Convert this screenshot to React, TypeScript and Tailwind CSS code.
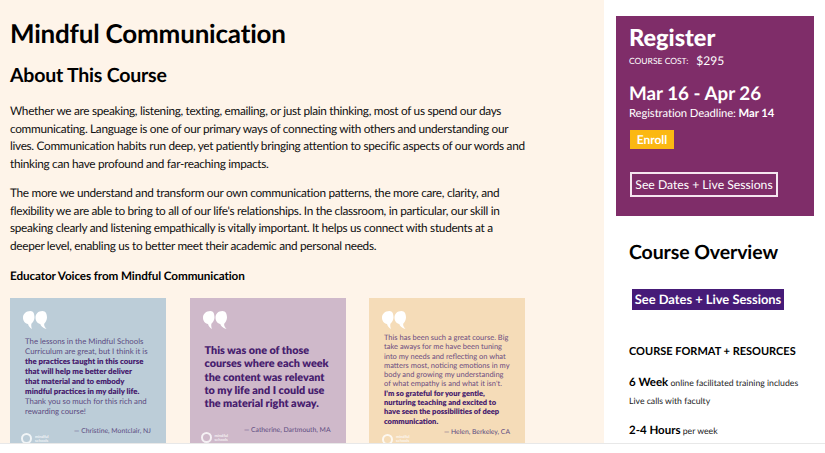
const font = "font-['Lato','Open_Sans',sans-serif]";

function QuoteMark() {
  return (
    <svg width="24" height="18" viewBox="0 0 24 18" className="block" fill="#fff">
      <path d="M7.500 0C3 0 0 2.800 0 6.800c0 3.400 2.200 5.700 5 6.200.6 2 1.700 3.700 4 5-.8-2-.9-3.700-.6-5.300C10 11.500 11.500 9 11.500 6.500 11.500 2.800 10.300 0 7.500 0z" />
      <path d="M19.500 0C15 0 12.500 2.800 12.500 6.800c0 3.400 2.200 5.700 4.800 6.200.7 2 1.900 3.700 6.200 5-2-2-2.500-3.700-2.300-5.300C22.600 11.500 24 9 24 6.500 24 2.800 22.500 0 19.500 0z" />
    </svg>
  );
}

function CardLogo() {
  return (
    <div className="flex items-center gap-[3px] opacity-80">
      <div className="h-[11px] w-[11px] rounded-full border-[2.500px] border-white" />
      <div className="text-[4px] leading-[4px] font-bold text-white">
        mindful
        <br />
        schools
      </div>
    </div>
  );
}

function VoiceCard({
  color,
  children,
  byline,
  top,
  bylineGap,
  logoOffset,
}: {
  color: string;
  children: React.ReactNode;
  byline: string;
  top: string;
  bylineGap: string;
  logoOffset: string;
}) {
  return (
    <div className={`h-[156px] w-[156px] shrink-0 pt-[13px] pr-[15px] pl-[15px] ${color}`}>
      <div className="-ml-[2px]">
        <QuoteMark />
      </div>
      <div className={top}>{children}</div>
      <div className={`text-right text-[6.800px] leading-[8px] text-[#5b4a80] ${bylineGap}`}>{byline}</div>
      <div className={`-mt-[2px] ${logoOffset}`}>
        <CardLogo />
      </div>
    </div>
  );
}

export default function App() {
  return (
    <div className={`flex h-[453px] w-[825px] flex-col overflow-hidden bg-white text-black [text-rendering:geometricPrecision] ${font}`}>
      <div className="flex h-[443px] min-h-0">
        <main className="w-[604px] shrink-0 overflow-hidden bg-[#fef4e9] pl-[10px]">
          <h1 className="mt-[15px] text-[26px] leading-[36px] font-bold tracking-[-0.2px]">Mindful Communication</h1>
          <h2 className="mt-[11px] text-[19.500px] leading-[28px] font-bold tracking-[-0.2px]">About This Course</h2>
          <p className="mt-[12px] w-[530px] text-[11.800px] leading-[17.500px] tracking-[-0.3px] text-[#111]">
            Whether we are speaking, listening, texting, emailing, or just plain thinking, most of us spend our days
            <br />
            communicating. Language is one of our primary ways of connecting with others and understanding our
            <br />
            lives. Communication habits run deep, yet patiently bringing attention to specific aspects of our words and
            <br />
            thinking can have profound and far-reaching impacts.
          </p>
          <p className="mt-[12px] w-[530px] text-[11.800px] leading-[17.500px] tracking-[-0.3px] text-[#111]">
            The more we understand and transform our own communication patterns, the more care, clarity, and
            <br />
            flexibility we are able to bring to all of our life's relationships. In the classroom, in particular, our skill in
            <br />
            speaking clearly and listening empathically is vitally important. It helps us connect with students at a
            <br />
            deeper level, enabling us to better meet their academic and personal needs.
          </p>
          <h3 className="mt-[13px] text-[11.700px] leading-[18px] font-bold tracking-[-0.1px]">Educator Voices from Mindful Communication</h3>
          <div className="mt-[13px] flex gap-[23.500px]">
            <VoiceCard
              color="bg-[#bccdd8]"
              byline="— Christine, Montclair, NJ"
              top="mt-[7px] text-[7.800px] leading-[10px] text-[#5b4a80]"
              bylineGap="mt-[11px]"
              logoOffset="-ml-[4px]"
            >
              The lessons in the Mindful Schools
              <br />
              Curriculum are great, but I think it is
              <br />
              <b className="font-extrabold text-[#47206e]">
                the practices taught in this course
                <br />
                that will help me better deliver
                <br />
                that material and to embody
                <br />
                mindful practices in my daily life.
              </b>
              <br />
              Thank you so much for this rich and
              <br />
              rewarding course!
            </VoiceCard>
            <VoiceCard
              color="bg-[#cfb9ca]"
              byline="— Catherine, Dartmouth, MA"
              top="mt-[15px] text-[10.800px] leading-[13.300px] font-extrabold text-[#47206e]"
              bylineGap="mt-[16px]"
              logoOffset="-ml-[4px]"
            >
              This was one of those
              <br />
              courses where each week
              <br />
              the content was relevant
              <br />
              to my life and I could use
              <br />
              the material right away.
            </VoiceCard>
            <VoiceCard
              color="bg-[#f5dcb8]"
              byline="— Helen, Berkeley, CA"
              top="mt-[4px] text-[7.500px] leading-[9.300px] text-[#6b4a80]"
              bylineGap="mt-[2px]"
              logoOffset="-ml-[2px]"
            >
              This has been such a great course. Big
              <br />
              take aways for me have been tuning
              <br />
              into my needs and reflecting on what
              <br />
              matters most, noticing emotions in my
              <br />
              body and growing my understanding
              <br />
              of what empathy is and what it isn't.
              <br />
              <b className="font-extrabold text-[#47206e]">
                I'm so grateful for your gentle,
                <br />
                nurturing teaching and excited to
                <br />
                have seen the possibilities of deep
                <br />
                communication.
              </b>
            </VoiceCard>
          </div>
        </main>
        <aside className="min-w-0 flex-1 overflow-hidden pt-[16px] pl-[12px]">
          <section className="h-[200px] w-[198px] bg-[#7f2d69] pt-[8px] pl-[13px] text-white">
            <div className="text-[23.500px] leading-[28px] font-black">Register</div>
            <div className="mt-[2px] flex items-center text-[12px] leading-[14px]">
              <span className="text-[8.500px]">COURSE COST:</span>
              <span className="ml-[8px]">$295</span>
            </div>
            <div className="mt-[14px] text-[18.800px] leading-[24px] font-bold">Mar 16 - Apr 26</div>
            <div className="text-[11.300px] leading-[16px] tracking-[-0.1px]">
              Registration Deadline: <b>Mar 14</b>
            </div>
            <div className="mt-[8px] ml-[1px] h-[19px] w-[44px] bg-[#fbb812] text-center text-[12px] leading-[19px] font-bold">
              Enroll
            </div>
            <div className="mt-[23px] ml-[1px] h-[25px] w-[148px] border-[2px] border-[#f5e6f0] text-center text-[12.200px] leading-[21px]">
              See Dates + Live Sessions
            </div>
          </section>
          <div className="pl-[13px]">
            <h2 className="mt-[23px] text-[19.500px] leading-[28px] font-bold tracking-[-0.1px]">Course Overview</h2>
            <div className="mt-[22px] ml-[3px] h-[21px] w-[152px] bg-[#461b78] text-center text-[12.900px] leading-[21px] font-bold text-white">
              See Dates + Live Sessions
            </div>
            <h3 className="mt-[34px] text-[11px] leading-[16px] font-bold">COURSE FORMAT + RESOURCES</h3>
            <div className="mt-[14px] text-[8.700px] leading-[18px] text-[#222]">
              <b className="text-[11.500px] text-black">6 Week</b> online facilitated training includes
              <br />
              Live calls with faculty
            </div>
            <div className="mt-[12px] text-[8.700px] leading-[18px] text-[#222]">
              <b className="text-[11.500px] text-black">2-4 Hours</b> per week
            </div>
          </div>
        </aside>
      </div>
      <div className="h-[10px] shrink-0 border-t border-[#e8e8e8] bg-white" />
    </div>
  );
}
